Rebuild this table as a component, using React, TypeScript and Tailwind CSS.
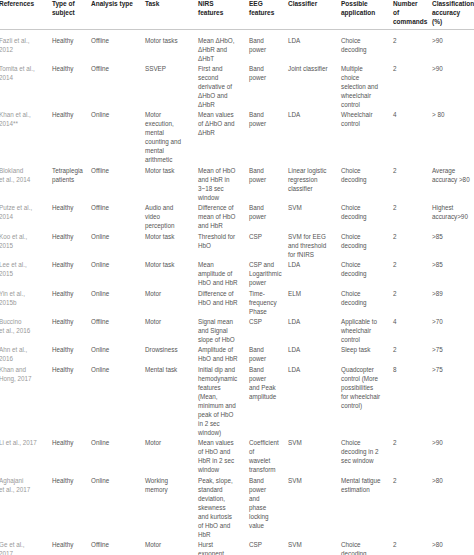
const cols = "grid grid-cols-[53px_39px_54px_53px_51px_39px_53px_52px_39px_43px]";

const header: string[][] = [
  ["References"],
  ["Type of", "subject"],
  ["Analysis type"],
  ["Task"],
  ["NIRS", "features"],
  ["EEG", "features"],
  ["Classifier"],
  ["Possible", "application"],
  ["Number", "of", "commands"],
  ["Classification", "accuracy", "(%)"],
];

const rows: string[][][] = [
  [["Fazli et al.,", "2012"], ["Healthy"], ["Offline"], ["Motor tasks"], ["Mean ΔHbO,", "ΔHbR and", "ΔHbT"], ["Band", "power"], ["LDA"], ["Choice", "decoding"], ["2"], [">90"]],
  [["Tomita et al.,", "2014"], ["Healthy"], ["Offline"], ["SSVEP"], ["First and", "second", "derivative of", "ΔHbO and", "ΔHbR"], ["Band", "power"], ["Joint classifier"], ["Multiple", "choice", "selection and", "wheelchair", "control"], ["2"], [">90"]],
  [["Khan et al.,", "2014**"], ["Healthy"], ["Online"], ["Motor", "execution,", "mental", "counting and", "mental", "arithmetic"], ["Mean values", "of ΔHbO and", "ΔHbR"], ["Band", "power"], ["LDA"], ["Wheelchair", "control"], ["4"], ["> 80"]],
  [["Blokland", "et al., 2014"], ["Tetraplegia", "patients"], ["Offline"], ["Motor task"], ["Mean of HbO", "and HbR in", "3~18 sec", "window"], ["Band", "power"], ["Linear logistic", "regression", "classifier"], ["Choice", "decoding"], ["2"], ["Average", "accuracy >80"]],
  [["Putze et al.,", "2014"], ["Healthy"], ["Offline"], ["Audio and", "video", "perception"], ["Difference of", "mean of HbO", "and HbR"], ["Band", "power"], ["SVM"], ["Choice", "decoding"], ["2"], ["Highest", "accuracy>90"]],
  [["Koo et al.,", "2015"], ["Healthy"], ["Online"], ["Motor task"], ["Threshold for", "HbO"], ["CSP"], ["SVM for EEG", "and threshold", "for fNIRS"], ["Choice", "decoding"], ["2"], [">85"]],
  [["Lee et al.,", "2015"], ["Healthy"], ["Online"], ["Motor task"], ["Mean", "amplitude of", "HbO and HbR"], ["CSP and", "Logarithmic", "power"], ["LDA"], ["Choice", "decoding"], ["2"], [">85"]],
  [["Yin et al.,", "2015b"], ["Healthy"], ["Online"], ["Motor"], ["Difference of", "HbO and HbR"], ["Time-", "frequency", "Phase"], ["ELM"], ["Choice", "decoding"], ["2"], [">89"]],
  [["Buccino", "et al., 2016"], ["Healthy"], ["Offline"], ["Motor"], ["Signal mean", "and Signal", "slope of HbO"], ["CSP"], ["LDA"], ["Applicable to", "wheelchair", "control"], ["4"], [">70"]],
  [["Ahn et al.,", "2016"], ["Healthy"], ["Online"], ["Drowsiness"], ["Amplitude of", "HbO and HbR"], ["Band", "power"], ["LDA"], ["Sleep task"], ["2"], [">75"]],
  [["Khan and", "Hong, 2017"], ["Healthy"], ["Online"], ["Mental task"], ["Initial dip and", "hemodynamic", "features", "(Mean,", "minimum and", "peak of HbO", "in 2 sec", "window)"], ["Band", "power", "and Peak", "amplitude"], ["LDA"], ["Quadcopter", "control (More", "possibilities", "for wheelchair", "control)"], ["8"], [">75"]],
  [["Li et al., 2017"], ["Healthy"], ["Online"], ["Motor"], ["Mean values", "of HbO and", "HbR in 2 sec", "window"], ["Coefficient", "of", "wavelet", "transform"], ["SVM"], ["Choice", "decoding in 2", "sec window"], ["2"], [">90"]],
  [["Aghajani", "et al., 2017"], ["Healthy"], ["Online"], ["Working", "memory"], ["Peak, slope,", "standard", "deviation,", "skewness", "and kurtosis", "of HbO and", "HbR"], ["Band", "power", "and", "phase", "locking", "value"], ["SVM"], ["Mental fatigue", "estimation"], ["2"], [">80"]],
  [["Ge et al.,", "2017"], ["Healthy"], ["Offline"], ["Motor"], ["Hurst", "exponent"], ["CSP"], ["SVM"], ["Choice", "decoding"], ["2"], [">80"]],
];

function Lines({ lines }: { lines: string[] }) {
  return (
    <>
      {lines.map((l, i) => (
        <div key={i} className="whitespace-nowrap">{l}</div>
      ))}
    </>
  );
}

export default function App() {
  return (
    <div className="w-[474px] h-[555px] overflow-hidden bg-white font-['Liberation_Sans',Arial,sans-serif]">
      <div className="-ml-[1px] w-[476px]">
        <div className={`${cols} -mt-[1px] pb-[3px] border-b border-[#c9c9c9] text-[6.5px] leading-[9px] font-bold text-[#222]`}>
          {header.map((h, i) => (
            <div key={i}><Lines lines={h} /></div>
          ))}
        </div>
        <div className="pt-[5.5px] text-[6.3px] leading-[9px] text-[#555]">
          {rows.map((r, ri) => (
            <div key={ri} className={`${cols} pb-[1.45px]`}>
              {r.map((c, ci) => (
                <div key={ci} className={ci === 0 ? "text-[#999]" : ""}>
                  <Lines lines={c} />
                </div>
              ))}
            </div>
          ))}
        </div>
      </div>
    </div>
  );
}
